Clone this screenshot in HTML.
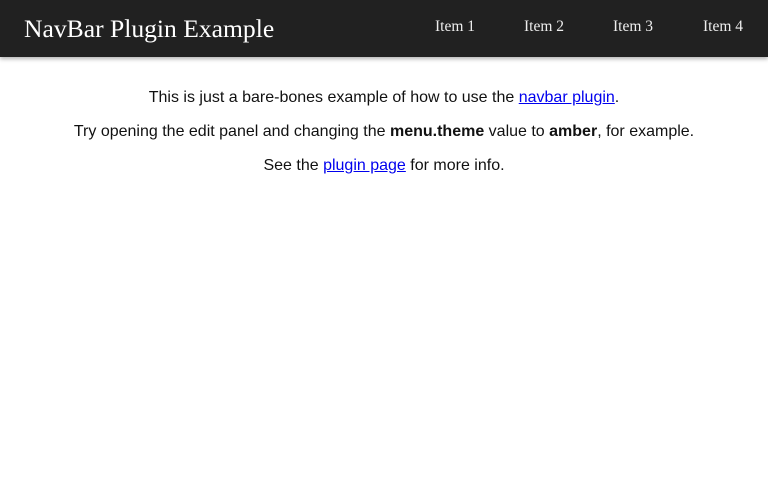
<!DOCTYPE html>
<html><head><style>
body{margin:0;background:#fff;font-family:"Liberation Sans",sans-serif;}
.nav{height:57px;background:#212121;color:#fff;position:relative;box-shadow:0 2px 4px rgba(0,0,0,0.3);font-family:"Liberation Serif",serif;}
.title{position:absolute;left:24px;top:14px;font-size:25.6px;}
.it{position:absolute;top:18px;font-size:15.5px;color:#eee;}
p{text-align:center;font-size:16px;margin:0;position:absolute;width:768px;color:#111;}
a{color:#00e;}
</style></head><body>
<div class="nav"><span class="title">NavBar Plugin Example</span>
<span class="it" style="left:435px">Item 1</span>
<span class="it" style="left:524px">Item 2</span>
<span class="it" style="left:613px">Item 3</span>
<span class="it" style="left:703px">Item 4</span></div>
<p style="top:89px">This is just a bare-bones example of how to use the <a href="#">navbar plugin</a>.</p>
<p style="top:123px">Try opening the edit panel and changing the <b>menu.theme</b> value to <b>amber</b>, for example.</p>
<p style="top:157px">See the <a href="#">plugin page</a> for more info.</p>
</body></html>
